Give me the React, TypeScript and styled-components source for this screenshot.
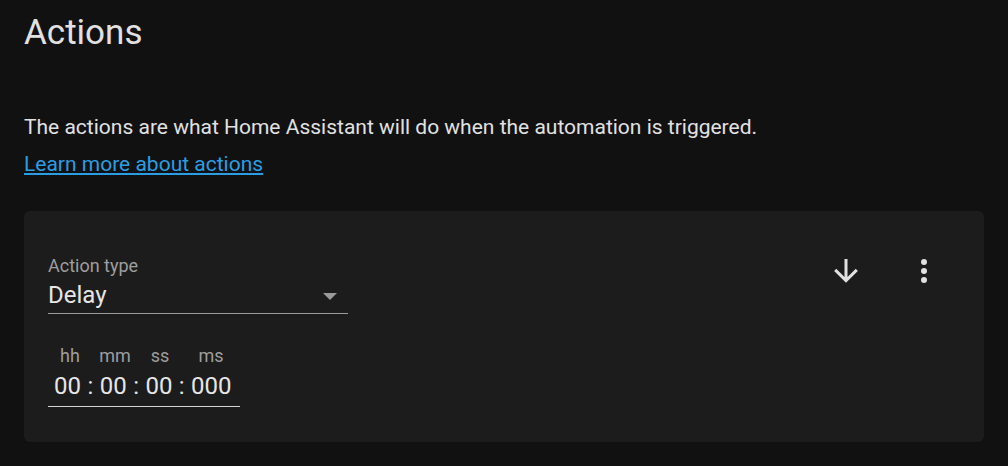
import { ReactElement } from "react";
import styled, { createGlobalStyle } from "styled-components";

const GlobalStyle = createGlobalStyle`
  html, body {
    margin: 0;
    padding: 0;
    background: #111111;
  }
  body {
    font-family: Roboto, "Noto Sans", sans-serif;
    color: #e1e1e1;
  }
`;

const Page = styled.div`
  width: 1008px;
  height: 466px;
  box-sizing: border-box;
  padding: 11px 24px 0 24px;
  overflow: hidden;
`;

const Title = styled.h1`
  margin: 0;
  font-size: 35px;
  font-weight: 400;
  line-height: 44px;
  color: #e1e1e1;
`;

const Description = styled.p`
  margin: 56px 0 0 0;
  font-size: 21px;
  line-height: 32px;
  color: #e1e1e1;
`;

const LinkRow = styled.div`
  margin-top: 3px;
  line-height: 36px;
  font-size: 21px;
`;

const LearnLink = styled.a`
  color: #2a9ee4;
  text-decoration: underline;
  text-underline-offset: 2px;
`;

const Card = styled.div`
  margin-top: 29px;
  background: #1c1c1c;
  border-radius: 6px;
  padding: 24px 24px 35px 24px;
  display: flex;
  justify-content: space-between;
`;

const Fields = styled.div`
  display: flex;
  flex-direction: column;
`;

const Select = styled.div`
  width: 300px;
  padding-top: 21px;
  border-bottom: 1px solid #9a9a9a;
  position: relative;
`;

const SelectLabel = styled.div`
  font-size: 18px;
  line-height: 20px;
  color: #9e9e9e;
`;

const SelectValue = styled.div`
  margin-top: 4px;
  font-size: 24px;
  line-height: 30px;
  padding-bottom: 3px;
  color: #e6e6e6;
`;

const Caret = styled.div`
  position: absolute;
  right: 11px;
  top: 58px;
  width: 0;
  height: 0;
  border-left: 7.5px solid transparent;
  border-right: 7.5px solid transparent;
  border-top: 7px solid #9a9a9a;
`;

const Duration = styled.div`
  margin-top: 32px;
  width: 192px;
  border-bottom: 1px solid #d4d4d4;
  padding-bottom: 5px;
`;

const UnitRow = styled.div`
  display: flex;
  font-size: 18px;
  line-height: 20px;
  color: #9e9e9e;
`;

const Unit = styled.span<{ $w: number }>`
  width: ${(p) => p.$w}px;
  text-align: center;
`;

const TimeRow = styled.div`
  margin-top: 5px;
  padding-left: 6px;
  font-size: 24px;
  line-height: 30px;
  word-spacing: 0.5px;
  color: #e6e6e6;
  white-space: pre;
`;

const Actions = styled.div`
  display: flex;
  gap: 42px;
  padding-top: 18px;
  padding-right: 18px;
  align-items: flex-start;
`;

const IconButton = styled.div`
  width: 36px;
  height: 36px;
  display: flex;
  align-items: center;
  justify-content: center;
  color: #e1e1e1;
`;

function ArrowDown(): ReactElement {
  return (
    <svg width="36" height="36" viewBox="0 0 24 24" fill="currentColor">
      <path d="M11,4H13V16L18.5,10.5L19.92,11.92L12,19.84L4.08,11.92L5.5,10.5L11,16V4Z" />
    </svg>
  );
}

function DotsVertical(): ReactElement {
  return (
    <svg width="36" height="36" viewBox="0 0 24 24" fill="currentColor">
      <path d="M12,16A2,2 0 0,1 14,18A2,2 0 0,1 12,20A2,2 0 0,1 10,18A2,2 0 0,1 12,16M12,10A2,2 0 0,1 14,12A2,2 0 0,1 12,14A2,2 0 0,1 10,12A2,2 0 0,1 12,10M12,4A2,2 0 0,1 14,6A2,2 0 0,1 12,8A2,2 0 0,1 10,6A2,2 0 0,1 12,4Z" />
    </svg>
  );
}

const units = [
  { label: "hh", w: 44 },
  { label: "mm", w: 46 },
  { label: "ss", w: 44 },
  { label: "ms", w: 58 },
];

export default function App(): ReactElement {
  return (
    <Page>
      <GlobalStyle />
      <Title>Actions</Title>
      <Description>
        The actions are what Home Assistant will do when the automation is
        triggered.
      </Description>
      <LinkRow>
        <LearnLink href="#">Learn more about actions</LearnLink>
      </LinkRow>
      <Card>
        <Fields>
          <Select>
            <SelectLabel>Action type</SelectLabel>
            <SelectValue>Delay</SelectValue>
            <Caret />
          </Select>
          <Duration>
            <UnitRow>
              {units.map((u) => (
                <Unit key={u.label} $w={u.w}>
                  {u.label}
                </Unit>
              ))}
            </UnitRow>
            <TimeRow>{"00 : 00 : 00 : 000"}</TimeRow>
          </Duration>
        </Fields>
        <Actions>
          <IconButton>
            <ArrowDown />
          </IconButton>
          <IconButton>
            <DotsVertical />
          </IconButton>
        </Actions>
      </Card>
    </Page>
  );
}
